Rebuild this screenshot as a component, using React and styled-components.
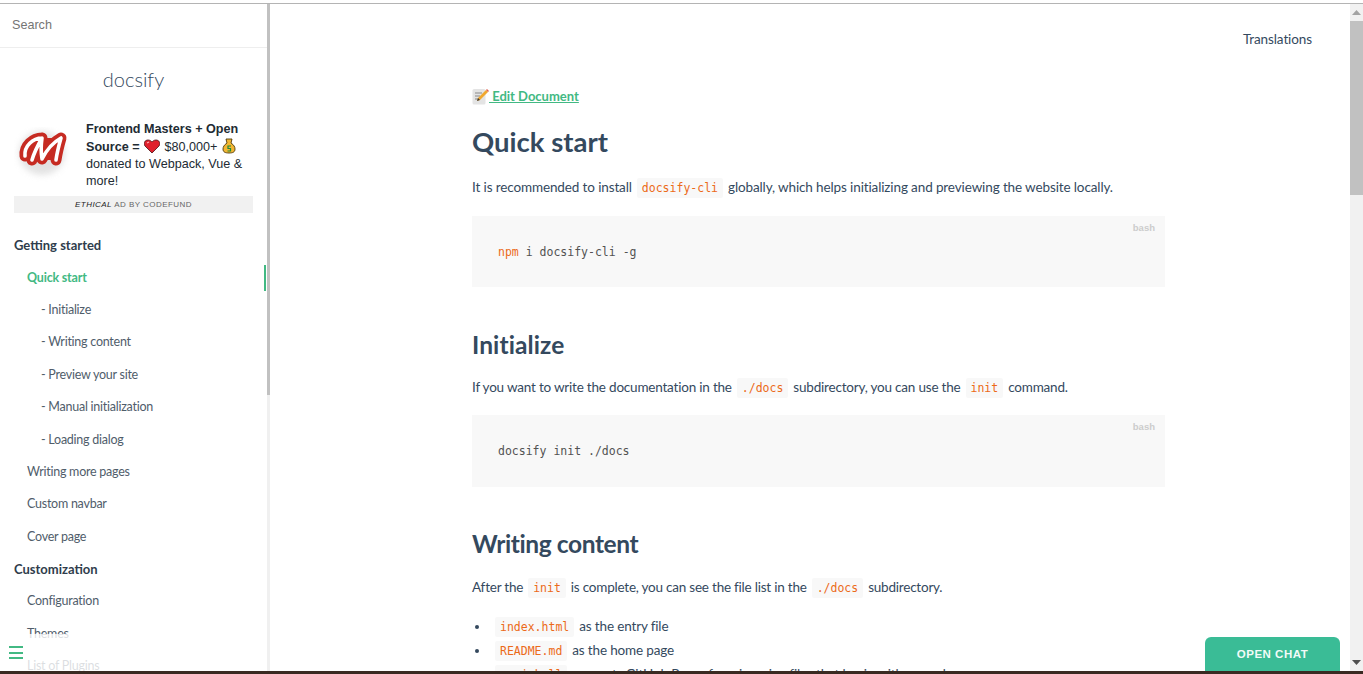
import React from 'react';
import styled, { createGlobalStyle } from 'styled-components';

const bodyFont = '"Lato", "Noto Sans", sans-serif';
const codeFont = '"DejaVu Sans Mono", "Liberation Mono", monospace';
const green = '#42b983';

const GlobalStyle = createGlobalStyle`
  html, body {
    margin: 0;
    height: 100%;
    overflow: hidden;
    background: #fff;
  }
  #root {
    height: 100%;
  }
  * {
    box-sizing: border-box;
  }
`;

const Page = styled.div`
  position: relative;
  display: flex;
  flex-direction: column;
  height: 674px;
  padding-top: 3px;
  overflow: hidden;
  border-bottom: 3px solid #3a2a22;
  font-family: ${bodyFont};
  color: #34495e;
`;

const Columns = styled.div`
  display: flex;
  flex: 1;
  min-height: 0;
  border-top: 1px solid #b4b4b4;
`;

const Sidebar = styled.aside`
  position: relative;
  display: flex;
  flex: 0 0 270px;
  overflow: hidden;
`;

const SidebarBody = styled.div`
  flex: 1;
  min-width: 0;
`;

const SideTrack = styled.div`
  flex: 0 0 3px;
  background: #f0f0f0;
`;

const SideThumb = styled.div`
  height: 391px;
  background: #c1c1c1;
`;

const SearchBox = styled.div`
  height: 44px;
  padding: 12px 12px 0;
  border-bottom: 1px solid #eee;
  font-family: "Liberation Sans", sans-serif;
  font-size: 12.6px;
  line-height: 18px;
  color: #757575;
`;

const Brand = styled.h1`
  margin: 18px 0 0;
  font-size: 20px;
  line-height: 26px;
  font-weight: 300;
  text-align: center;
  color: #34495e;
`;

const Ad = styled.div`
  display: grid;
  grid-template-columns: 72px 1fr;
  align-items: center;
  margin: 28.5px 14px 0;
  font-family: "Liberation Sans", sans-serif;
  font-size: 12.6px;
  line-height: 17px;
  color: #222b33;
`;

const AdCopy = styled.div`
  padding-right: 10px;

  b {
    font-weight: 700;
  }

  svg {
    margin: 0 1px;
    vertical-align: -3px;
  }
`;

const AdFoot = styled.div`
  margin: 6.7px 14px 0;
  height: 17px;
  background: #f1f1f1;
  font-family: "Liberation Sans", sans-serif;
  font-size: 8px;
  line-height: 17px;
  letter-spacing: 0.45px;
  text-align: center;
  color: #666;

  em {
    color: #222;
  }
`;

const Nav = styled.nav`
  margin-top: 16px;
`;

const NavItem = styled.div`
  position: relative;
  height: 32.4px;
  padding-left: ${(p) => (p.$level === 0 ? 14 : p.$level === 1 ? 27 : 41)}px;
  font-size: ${(p) => (p.$level === 0 ? 13 : 12.5)}px;
  line-height: 32.4px;
  letter-spacing: ${(p) => (p.$level === 0 ? 0 : p.$active ? -0.2 : -0.25)}px;
  font-weight: ${(p) => (p.$level === 0 || p.$active ? 700 : 400)};
  color: ${(p) => (p.$active ? green : p.$level === 0 ? '#2f3d4c' : '#505d6b')};

  &::after {
    content: '';
    display: ${(p) => (p.$active ? 'block' : 'none')};
    position: absolute;
    top: 3px;
    right: 1px;
    bottom: 3px;
    width: 2px;
    background: ${green};
  }
`;

const SidebarToggle = styled.div`
  position: absolute;
  left: 0;
  right: 3px;
  bottom: 0;
  height: 37px;
  padding: 12px 9px 0;
  background: rgba(255, 255, 255, 0.8);
`;

const ToggleBar = styled.span`
  display: block;
  width: 14px;
  height: 2px;
  margin-bottom: 3.5px;
  background: ${green};
`;

const Main = styled.main`
  flex: 1;
  min-width: 0;
  overflow: hidden;
`;

const TopNav = styled.div`
  height: 25px;
  margin-top: 23px;
  padding-right: 38px;
  text-align: right;
  font-size: 13.5px;
  line-height: 25px;
  letter-spacing: -0.1px;
  color: #34495e;
`;

const Content = styled.article`
  width: 693px;
  margin-left: 202px;
  font-size: 13.5px;
`;

const EditLink = styled.a`
  display: block;
  margin-top: 34px;
  font-size: 13px;
  line-height: 20px;
  font-weight: 700;
  color: ${green};
  text-decoration: underline;

  svg {
    vertical-align: -4px;
  }
`;

const Heading = styled.h2`
  margin: ${(p) => p.$top}px 0 0;
  font-size: ${(p) => p.$size}px;
  line-height: 40px;
  font-weight: 700;
  letter-spacing: ${(p) => p.$track || 0}px;
  color: #34495e;
`;

const Para = styled.p`
  margin: ${(p) => p.$top}px 0 0;
  height: 26px;
  line-height: 26px;
  letter-spacing: ${(p) => p.$track}px;
  color: #34495e;
`;

const Code = styled.code`
  display: inline-block;
  margin: 0 5px;
  padding: 0 5px;
  height: 20px;
  border-radius: 2px;
  background: #f8f8f8;
  font-family: ${codeFont};
  font-size: 11.5px;
  line-height: 20px;
  letter-spacing: 0;
  color: #ec6a18;
`;

const CodeBlock = styled.pre`
  position: relative;
  height: ${(p) => p.$h}px;
  margin: ${(p) => p.$top}px 0 0;
  padding: 26px;
  background: #f8f8f8;
  font-family: ${codeFont};
  font-size: 11.5px;
  line-height: 21px;
  color: #525252;

  span {
    color: #ec6a18;
  }
`;

const LangTag = styled.i`
  position: absolute;
  top: 6px;
  right: 10px;
  font-family: "Liberation Sans", sans-serif;
  font-style: normal;
  font-size: 9.5px;
  line-height: 12px;
  font-weight: 700;
  color: #ccc;
`;

const List = styled.ul`
  margin: 14px 0 0;
  padding-left: 18px;
  letter-spacing: -0.15px;
`;

const ListItem = styled.li`
  height: 24px;
  line-height: 24px;
  color: #34495e;
`;

const Scrollbar = styled.div`
  display: flex;
  flex: 0 0 13px;
  flex-direction: column;
  background: #f1f1f1;
`;

const ScrollButton = styled.div`
  display: flex;
  flex: 0 0 17px;
  align-items: center;
  justify-content: center;
`;

const ScrollThumb = styled.div`
  height: 174px;
  background: #c1c1c1;
`;

const ScrollRest = styled.div`
  flex: 1;
`;

const ChatButton = styled.button`
  position: absolute;
  right: 23px;
  bottom: 0;
  width: 135px;
  height: 34px;
  border: 0;
  border-radius: 6px 6px 0 0;
  background: #3abc96;
  font-family: "Liberation Sans", sans-serif;
  font-size: 11.5px;
  font-weight: 700;
  letter-spacing: 0.5px;
  color: #f2fbf8;
`;

const MastersLogo = () => {
  const script = 'M11 29 C10 19 19 11 28 11 C24 18 20 26 18 33 M28 11 C27 18 27 26 28 32 C32 24 38 16 47 11 C45 18 43 26 42 33';
  return (
    <svg width="56" height="56" viewBox="0 0 56 56">
      <defs>
        <filter id="logoShadow" x="-30%" y="-30%" width="160%" height="160%">
          <feGaussianBlur stdDeviation="3" />
        </filter>
      </defs>
      <ellipse cx="28" cy="26" rx="23" ry="22" fill="#ccc" opacity="0.55" filter="url(#logoShadow)" />
      <path d="M11 29 L28 11 L47 11 L42 33 L18 33 Z" fill="#c62b22" />
      <path d={script} fill="none" stroke="#c62b22" strokeWidth="11" strokeLinecap="round" strokeLinejoin="round" />
      <path d={script} fill="none" stroke="#fff" strokeWidth="3.6" strokeLinecap="round" strokeLinejoin="round" />
    </svg>
  );
};

const HeartIcon = () => (
  <svg width="16" height="15" viewBox="0 0 16 15">
    <path d="M8 14 L1 7 C-1 4 1 1 4 1 C6 1 7 2 8 3 C9 2 10 1 12 1 C15 1 17 4 15 7 Z" fill="#e0202c" stroke="#4a1014" strokeWidth="0.8" />
    <path d="M3 4 L5 3" stroke="#ffb3b3" strokeWidth="1.2" />
  </svg>
);

const MoneyBagIcon = () => (
  <svg width="14" height="16" viewBox="0 0 14 16">
    <path d="M4 1 H10 L9 5 C12 7 13 9 13 11 C13 14 11 15 7 15 C3 15 1 14 1 11 C1 9 2 7 5 5 Z" fill="#f2b632" stroke="#4d3a0c" strokeWidth="0.9" />
    <path d="M9 8 H6 V10.5 H8.5 V13 H5.5" fill="none" stroke="#1f8a3b" strokeWidth="1.2" />
  </svg>
);

const MemoIcon = () => (
  <svg width="17" height="17" viewBox="0 0 17 17">
    <rect x="0.5" y="1" width="13" height="15.5" rx="1.5" fill="#e4e4e4" />
    <path d="M3 5 H10 M3 8 H8 M3 11 H7" stroke="#8a8a8a" strokeWidth="1" />
    <path d="M5 13 L6 10 L14 2 L16 4 L8 12 Z" fill="#f0a830" />
    <path d="M14 2 L15 1 L17 3 L16 4 Z" fill="#e2604f" />
    <path d="M5 13 L6 10 L8 12 Z" fill="#3a3a3a" />
  </svg>
);

const navItems = [
  { label: 'Getting started', level: 0 },
  { label: 'Quick start', level: 1, active: true },
  { label: '- Initialize', level: 2 },
  { label: '- Writing content', level: 2 },
  { label: '- Preview your site', level: 2 },
  { label: '- Manual initialization', level: 2 },
  { label: '- Loading dialog', level: 2 },
  { label: 'Writing more pages', level: 1 },
  { label: 'Custom navbar', level: 1 },
  { label: 'Cover page', level: 1 },
  { label: 'Customization', level: 0 },
  { label: 'Configuration', level: 1 },
  { label: 'Themes', level: 1 },
  { label: 'List of Plugins', level: 1 },
];

export default function App() {
  return (
    <>
      <GlobalStyle />
      <Page>
        <Columns>
          <Sidebar>
            <SidebarBody>
              <SearchBox>Search</SearchBox>
              <Brand>docsify</Brand>
              <Ad>
                <MastersLogo />
                <AdCopy>
                  <b>Frontend Masters + Open Source =</b> <HeartIcon /> $80,000+ <MoneyBagIcon /> donated to Webpack, Vue &amp; more!
                </AdCopy>
              </Ad>
              <AdFoot>
                <em>ETHICAL</em> AD BY CODEFUND
              </AdFoot>
              <Nav>
                {navItems.map((item) => (
                  <NavItem key={item.label} $level={item.level} $active={item.active}>
                    {item.label}
                  </NavItem>
                ))}
              </Nav>
            </SidebarBody>
            <SideTrack>
              <SideThumb />
            </SideTrack>
            <SidebarToggle>
              <ToggleBar />
              <ToggleBar />
              <ToggleBar />
            </SidebarToggle>
          </Sidebar>
          <Main>
            <TopNav>Translations</TopNav>
            <Content>
              <EditLink>
                <MemoIcon /> Edit Document
              </EditLink>
              <Heading $top={16} $size={27.5}>Quick start</Heading>
              <Para $top={12} $track={-0.12}>
                It is recommended to install<Code>docsify-cli</Code>globally, which helps initializing and previewing the website locally.
              </Para>
              <CodeBlock $top={16} $h={71}>
                <LangTag>bash</LangTag>
                <span>npm</span> i docsify-cli -g
              </CodeBlock>
              <Heading $top={38} $size={24.5} $track={0.1}>Initialize</Heading>
              <Para $top={9} $track={-0.2}>
                If you want to write the documentation in the<Code>./docs</Code>subdirectory, you can use the<Code>init</Code>command.
              </Para>
              <CodeBlock $top={15} $h={72}>
                <LangTag>bash</LangTag>
                docsify init ./docs
              </CodeBlock>
              <Heading $top={37} $size={24.5} $track={-0.4}>Writing content</Heading>
              <Para $top={10} $track={-0.22}>
                After the<Code>init</Code>is complete, you can see the file list in the<Code>./docs</Code>subdirectory.
              </Para>
              <List>
                <ListItem><Code>index.html</Code>as the entry file</ListItem>
                <ListItem><Code>README.md</Code>as the home page</ListItem>
                <ListItem><Code>.nojekyll</Code>prevents GitHub Pages from ignoring files that begin with an underscore</ListItem>
              </List>
            </Content>
          </Main>
          <Scrollbar>
            <ScrollButton>
              <svg width="9" height="5" viewBox="0 0 9 5"><path d="M0 5 L4.5 0 L9 5 Z" fill="#a3a3a3" /></svg>
            </ScrollButton>
            <ScrollThumb />
            <ScrollRest />
            <ScrollButton>
              <svg width="9" height="5" viewBox="0 0 9 5"><path d="M0 0 L9 0 L4.5 5 Z" fill="#505050" /></svg>
            </ScrollButton>
          </Scrollbar>
        </Columns>
        <ChatButton>OPEN CHAT</ChatButton>
      </Page>
    </>
  );
}
